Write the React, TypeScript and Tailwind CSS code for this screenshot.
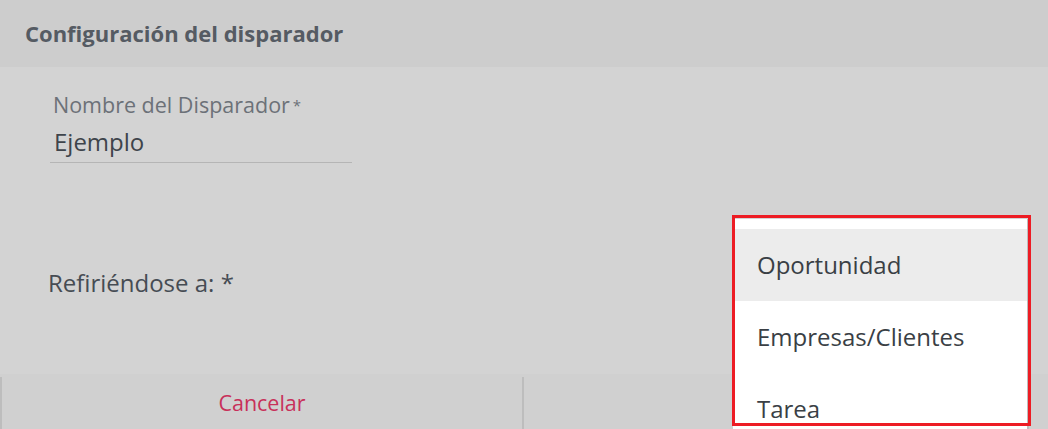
const options = ["Oportunidad", "Empresas/Clientes", "Tarea"];

export default function App() {
  return (
    <div
      className="relative h-[429px] w-full overflow-hidden bg-[#d3d3d3]"
      style={{ fontFamily: '"Open Sans", "Noto Sans", sans-serif' }}
    >
      <div className="flex h-[67px] items-center bg-[#cdcdcd] px-[25px]">
        <h1 className="text-[22px] font-bold text-[#555b63]">Configuración del disparador</h1>
      </div>

      <div className="h-[307px] px-[50px] pt-[23px]">
        <div className="w-[302px] border-b border-[#b5b5b5] pb-[3px]">
          <label className="block pl-[3px] text-[21.5px] leading-[30px] text-[#6c7178]">
            Nombre del Disparador<span className="ml-[3px] align-top text-[15px]">*</span>
          </label>
          <div className="mt-[5px] pl-[4px] text-[24px] leading-[34px] text-[#3e444b]">Ejemplo</div>
        </div>
        <div className="mt-[104px] -ml-[2px] text-[24px] leading-[32px] text-[#464c53]">Refiriéndose a: *</div>
      </div>

      <div className="grid h-[55px] grid-cols-2 bg-[#d0d0d0] pt-[3px]">
        <button className="border-l-2 border-r-2 border-[#bdbdbd] text-[21.5px] text-[#c8305a]">Cancelar</button>
        <div />
      </div>

      <div className="absolute left-[733px] top-[219px] w-[294px] bg-white pt-[10px] shadow-[2px_0_0_#bdbdbd]">
        {options.map((o, i) => (
          <div
            key={o}
            className={`flex h-[72px] items-center pl-[24px] text-[24px] text-[#3a3f45] ${i === 0 ? "bg-[#ececec]" : ""}`}
          >
            {o}
          </div>
        ))}
      </div>

      <div className="absolute left-[732px] top-[215px] h-[211px] w-[299px] border-[3px] border-[#ed1c24]" />
    </div>
  );
}
